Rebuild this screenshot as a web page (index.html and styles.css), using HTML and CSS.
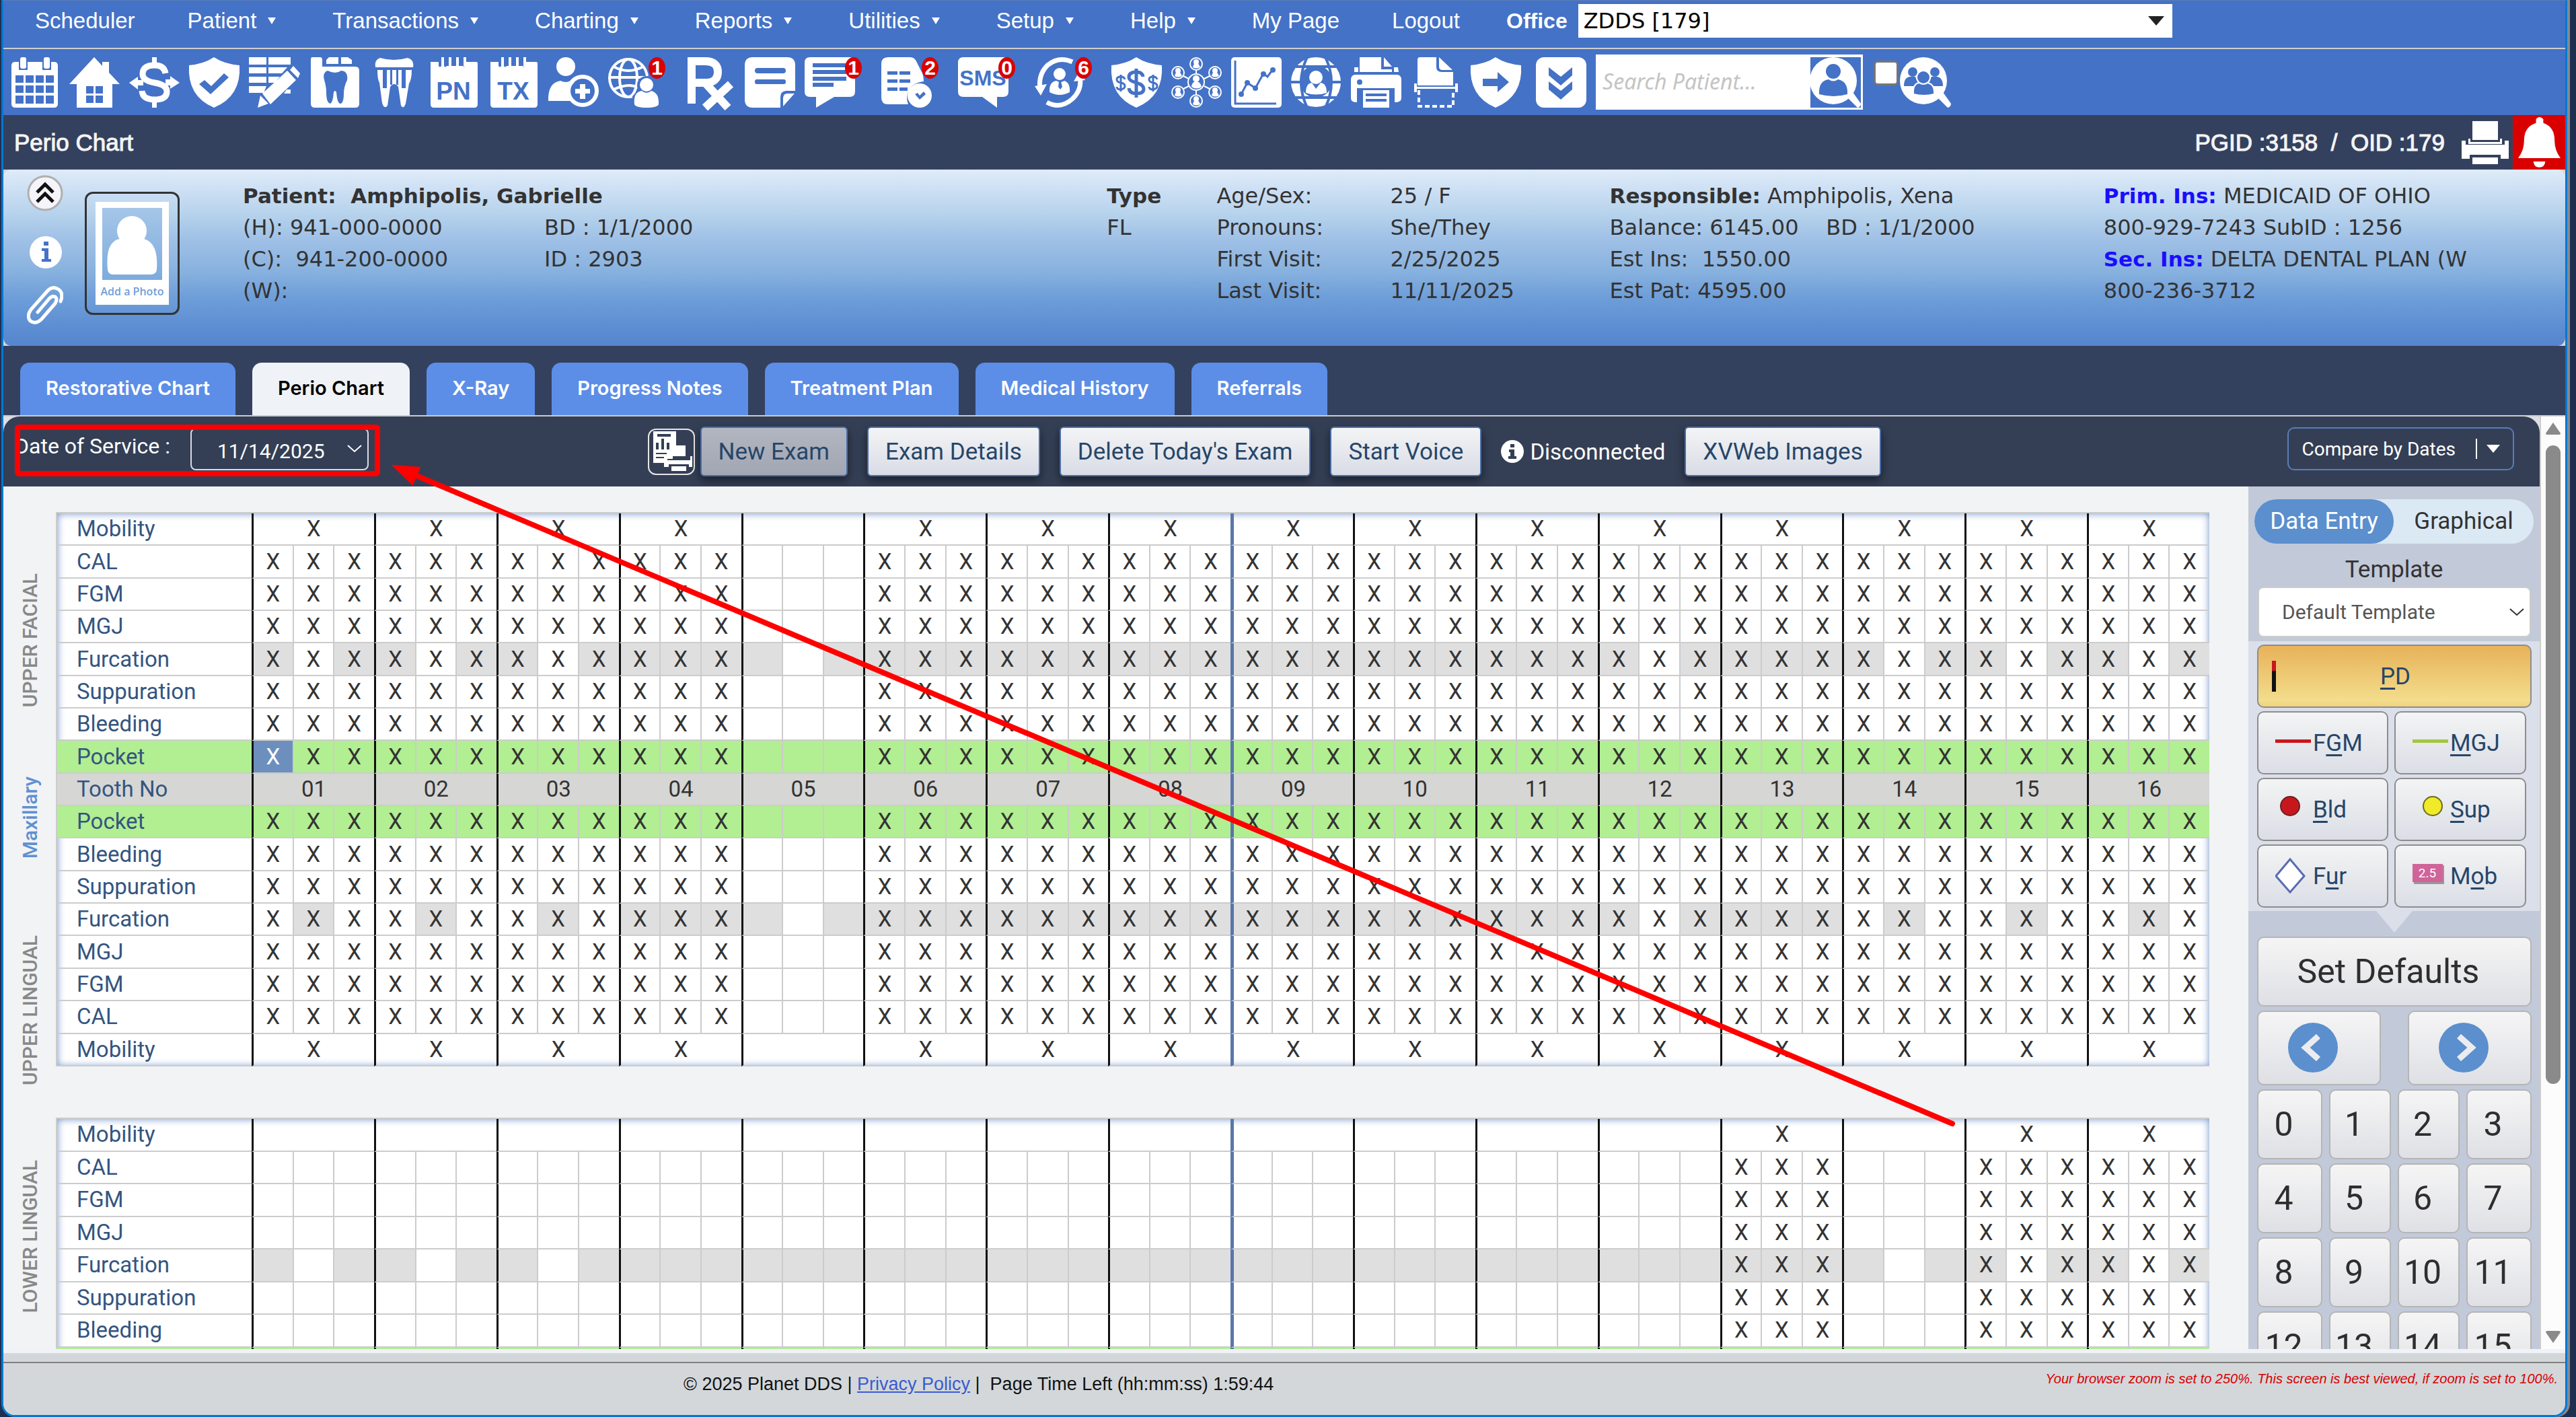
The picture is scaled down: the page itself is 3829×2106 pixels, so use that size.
FILE: index.html
```html
<!DOCTYPE html>
<html lang="en">
<head>
<meta charset="utf-8">
<title>Perio Chart</title>
<link rel="stylesheet" href="styles.css">
</head>
<body>
<div class="frame">
  <nav class="menu">
    <a href="#">Scheduler</a>
    <a href="#" class="drop">Patient</a>
    <a href="#" class="drop">Transactions</a>
    <a href="#" class="drop">Charting</a>
    <a href="#" class="drop">Reports</a>
    <a href="#" class="drop">Utilities</a>
    <a href="#" class="drop">Setup</a>
    <a href="#" class="drop">Help</a>
    <a href="#">My Page</a>
    <a href="#">Logout</a>
    <label for="office">Office</label>
    <span class="select office"><select id="office"><option>ZDDS [179]</option></select><svg viewBox="0 0 24 14"><path d="M0 0h24L12 14z" fill="#222"/></svg></span>
  </nav>

  <div class="tools">
    <button aria-label="Calendar"><svg viewBox="0 0 75 75"><path d="M8 7h6v12h13V7h22v12h13V7h5q5 0 5 6v56q0 6-6 6H9q-6 0-6-6V13q0-6 5-6z"/><rect x="16" width="9" height="17" rx="3"/><rect x="51" width="9" height="17" rx="3"/><path class="cut" d="M9 27h12v11H9zm15 0h12v11H24zm15 0h12v11H39zm15 0h12v11H54zM9 42h12v11H9zm15 0h12v11H24zm15 0h12v11H39zm15 0h12v11H54zM9 57h12v12H9zm15 0h12v12H24zm15 0h12v12H39zm15 0h12v12H54z"/></svg></button>
    <button aria-label="Home"><svg viewBox="0 0 75 75"><path d="M37 0l12 13V7h10v16l16 17H64v35H11V40H0z"/><path class="cut" d="M25 43h11v11H25zm14 0h11v11H39zM25 57h11v11H25zm14 0h11v11H39z"/></svg></button>
    <button aria-label="Payments"><svg viewBox="0 0 75 75"><path class="line" stroke-width="9" d="M54 24Q52 12 38 12Q20 12 20 25Q20 35 38 38Q56 41 56 51Q56 63 38 63Q20 63 19 50"/><path d="M34 0h7v12h-7zM34 62h7v13h-7zM0 38l13-9v5h8v8h-8v6zM75 38L61 28v5h-7v9h7v5z"/></svg></button>
    <button aria-label="Insurance check"><svg viewBox="0 0 75 75"><path d="M37 0q15 10 38 12Q78 58 37 75Q-3 58 0 12Q22 10 37 0z"/><path class="cut" d="M15 40l8-6 10 9 19-19 7 6-27 25z"/></svg></button>
    <button aria-label="Edit ledger"><svg viewBox="0 0 75 75"><path d="M0 0h26v11H0zm29 0h33v11H29zM0 15h26v9H0zm29 0h28l-8 9H29zM0 29h26v9H0zm29 0h17l-8 9H29zM0 43h26l-4 10H0zM56 48h6v6H52zM66 13l10 11-3 7-12-12zM57 20l13 14-38 36-12-16zM17 57l12 12-16 6z"/></svg></button>
    <button aria-label="Tooth chart"><svg viewBox="0 0 75 75"><path d="M5 0h12q3 0 3 4v10h49q6 0 6 6v49q0 6-6 6H9q-6 0-6-6V4q0-4 2-4z"/><path d="M30 0h14v10H26V4zM48 0h10l6 4v6H48z"/><path class="cut" d="M28 20q12 6 20 0 11 1 9 14-5 10-5 20 0 16-6 15-4-2-5-17-2-4-4 0-1 15-5 17-6-1-6-17 0-8-3-18-3-11 5-14z"/></svg></button>
    <button aria-label="Perio"><svg viewBox="0 0 75 75"><path d="M17 1q20 6 41 0 10 3 8 14H10Q8 4 17 1zM13 19h8v27h6V19h5v22h3V19h6v22h3V19h5v27h6V19h9q0 14-4 20l-5 30q-3 9-7 3l-4-28q-6-8-12 0l-4 28q-5 6-8-4l-4-30q-3-5-3-19z"/></svg></button>
    <button aria-label="Progress notes"><svg viewBox="0 0 75 75"><path d="M3 7h12v6q2 3 4 0V7h4v6q2 3 4 0h24q2 3 4 0V7h16q2 0 2 2v61q0 5-5 5H8q-5 0-5-5z"/><path d="M19 0h4v14h-4zm11 0h4v14h-4zm11 0h4v14h-4zm11 0h4v14h-4z"/><text class="cut" x="37" y="63" font-size="37">PN</text></svg></button>
    <button aria-label="Treatment plan"><svg viewBox="0 0 75 75"><path d="M3 7h12v6q2 3 4 0V7h4v6q2 3 4 0h24q2 3 4 0V7h16q2 0 2 2v61q0 5-5 5H8q-5 0-5-5z"/><path d="M19 0h4v14h-4zm11 0h4v14h-4zm11 0h4v14h-4zm11 0h4v14h-4z"/><text class="cut" x="37" y="63" font-size="37">TX</text></svg></button>
    <button aria-label="Add patient"><svg viewBox="0 0 75 75"><ellipse cx="26" cy="14" rx="14" ry="14"/><path d="M0 65Q-1 38 18 35q8 4 15 0l6 2q-12 12-5 28z"/><circle cx="51" cy="50" r="21" fill="none" stroke="#fff" stroke-width="6"/><path d="M47 40h8v7h7v7h-7v8h-8v-8h-7v-7h7z"/></svg></button>
    <button class="badged" aria-label="Online patients"><svg viewBox="0 0 75 75"><g class="line" stroke-width="4"><circle cx="30" cy="31" r="28"/><ellipse cx="30" cy="31" rx="13" ry="28"/><path d="M2 30h56M8 14q22 12 44 0M8 48q22-10 36-3"/></g><circle class="cut" cx="57" cy="42" r="14"/><path class="cut" d="M36 75V58q10-12 20-8l19 8v17z"/><circle cx="57" cy="41" r="10"/><path d="M39 70q-2-18 11-20 7 6 14 0 12 3 11 20-2 5-18 5t-18-5z"/></svg><b>1</b></button>
    <button class="wide" aria-label="Prescriptions"><svg viewBox="0 0 75 75"><path class="line" stroke-width="12" d="M10 69V6H30Q49 6 49 22Q49 38 30 38H12M30 38L64 75M68 40L30 75"/></svg></button>
    <button aria-label="Notes"><svg viewBox="0 0 75 75"><path d="M12 0h51q12 0 12 12v38H61q-8 1-8 9v16H12Q0 75 0 63V12Q0 0 12 0z"/><path d="M57 73V60q1-6 6-6h11z"/><rect class="cut" x="15" y="16" width="46" height="8" rx="4"/><rect class="cut" x="15" y="33" width="46" height="7" rx="3"/></svg></button>
    <button class="badged" aria-label="Messages"><svg viewBox="0 0 75 75"><path d="M8 0h59q8 0 8 8v43q0 8-8 8H44L17 75V59H8q-8 0-8-8V8q0-8 8-8z"/><path class="cut" d="M12 9h50v6H12zm0 10h50v6H12zm0 10h50v6H12zm0 9h31v6H12z"/></svg><b>1</b></button>
    <button class="badged wide" aria-label="Tasks"><svg viewBox="0 0 75 75"><path d="M10 0h33q6 0 9 6l7 14q4 6 4 16-19 2-24 18-2 9 1 16H10Q0 70 0 60V10Q0 0 10 0z"/><path class="cut" d="M9 21h15v5H9zm18 0h16v5H27zM9 33h15v5H9zm18 0h16v5H27zM9 45h15v5H9zm18 0h12v5H27z"/><circle cx="57" cy="57" r="18"/><path class="cut" d="M50 55l4-2 3 4 6-6 3 4-9 8z"/></svg><b>2</b></button>
    <button class="badged wide" aria-label="SMS"><svg viewBox="0 0 75 75"><path d="M8 0h59q8 0 8 8v43q0 8-8 8h-9v16L36 59H8q-8 0-8-8V8q0-8 8-8z"/><text class="cut" x="37" y="42" font-size="32">SMS</text></svg><b>0</b></button>
    <button class="badged wide" aria-label="Recall"><svg viewBox="0 0 75 75"><path class="line" stroke-width="7" d="M56 7Q36-2 19 12Q5 26 8 47M18 67Q38 78 56 62Q71 48 67 28"/><path d="M0 43l18-3-9 17zM75 34l-17 2 9-16z"/><circle cx="37" cy="25" r="9"/><path d="M22 52q-1-15 10-17 6 4 12 0 9 3 8 17-15 8-30 0z"/><path class="cut" d="M36 36h3l2 8-3 4-3-4z"/></svg><b>6</b></button>
    <button class="wide" aria-label="Fees"><svg viewBox="0 0 75 75"><path d="M37 0q15 10 38 12Q78 58 37 75Q-3 58 0 12Q22 10 37 0z"/><g fill="none" stroke="#4472c7"><path stroke-width="5" d="M47 29q-1-7-10-7-11 0-11 8 0 5 11 8t11 9q0 7-11 7-10 0-11-8M37 17v43"/><path stroke-width="3" d="M20 33q-1-4-6-4-6 0-6 4t6 5 6 5-6 5q-6 0-6-4M14 26v25M68 33q-1-4-6-4-6 0-6 4t6 5 6 5-6 5q-6 0-6-4M62 26v25"/></g></svg></button>
    <button aria-label="Referral network"><svg viewBox="0 0 75 75"><g class="line" stroke-width="2"><circle cx="37" cy="37" r="12"/><circle cx="37" cy="10" r="9"/><circle cx="37" cy="65" r="9"/><circle cx="10" cy="23" r="9"/><circle cx="65" cy="23" r="9"/><circle cx="10" cy="52" r="9"/><circle cx="65" cy="52" r="9"/><path d="M37 19v6M37 49v7M18 28l8 4M57 28l-8 4M18 47l8-4M57 47l-8-4"/></g><g><circle cx="37" cy="32" r="5"/><path d="M30 44q1-8 7-8t8 8q-7 5-15 0z"/><circle cx="37" cy="7" r="4"/><path d="M32 15q1-6 5-6t6 6q-6 3-11 0z"/><circle cx="37" cy="62" r="4"/><path d="M32 70q1-6 5-6t6 6q-6 3-11 0z"/><circle cx="10" cy="20" r="4"/><path d="M5 28q1-6 5-6t6 6q-6 3-11 0z"/><circle cx="65" cy="20" r="4"/><path d="M60 28q1-6 5-6t6 6q-6 3-11 0z"/><circle cx="10" cy="49" r="4"/><path d="M5 57q1-6 5-6t6 6q-6 3-11 0z"/><circle cx="65" cy="49" r="4"/><path d="M60 57q1-6 5-6t6 6q-6 3-11 0z"/></g></svg></button>
    <button aria-label="Reports"><svg viewBox="0 0 75 75"><rect width="75" height="75" rx="5"/><g fill="none" stroke="#4472c7" stroke-width="3"><path d="M6 5v64h61M15 55l9-17 12 8 12-22 6 5 8-11"/></g><g class="cut"><circle cx="15" cy="55" r="4"/><circle cx="24" cy="38" r="4"/><circle cx="36" cy="46" r="4"/><circle cx="48" cy="25" r="4"/><circle cx="62" cy="19" r="4"/></g></svg></button>
    <button aria-label="Portal"><svg viewBox="0 0 75 75"><circle cx="37" cy="37" r="37"/><g fill="none" stroke="#4472c7" stroke-width="4"><path d="M0 37h75M7 14h61M7 60h61M24 0Q6 37 24 75M51 0q18 37 0 75"/></g><circle class="cut" cx="37" cy="36" r="24"/><circle cx="37" cy="30" r="10"/><path d="M22 53q0-14 9-15l6 9 7-9q9 1 9 15-16 5-31 0z"/></svg></button>
    <button aria-label="Print"><svg viewBox="0 0 75 75"><path d="M13 0h32v18h16v4H13zM49 0l12 14H49zM5 15h6v7H5zM64 15h6l1 7h-7zM7 26h61q7 0 7 8v27q0 6-10 6V46H9v21Q0 67 0 61V34q0-8 7-8zM18 49h39v26H18z"/><path class="cut" d="M22 54h31v4H22zm0 8h31v4H22z"/><circle class="cut" cx="13" cy="37" r="4"/></svg></button>
    <button aria-label="Scan"><svg viewBox="0 0 75 75"><path d="M14 0h24v15q0 7 8 7h17v20H10V4q0-4 4-4zM42 0l20 19H47q-5 0-5-5zM5 39h4v5h57v-5h4v13h-4v-5H9v5H5z"/><path class="line" stroke-width="4" stroke-dasharray="7 4" d="M12 49v24h51V49"/></svg></button>
    <button aria-label="Forward"><svg viewBox="0 0 75 75"><path d="M37 0q15 10 38 12Q78 58 37 75Q-3 58 0 12Q22 10 37 0z"/><path class="cut" d="M18 32h22V22l17 15-17 15V43H18z"/></svg></button>
    <button class="more" aria-label="More"><svg viewBox="0 0 75 75"><rect width="75" height="75" rx="12"/><path class="cut" d="M19 15l18 14 17-14v12L37 42 19 27zM19 36l18 14 17-14v12L37 63 19 48z"/></svg></button>
    <div class="search">
      <input type="text" aria-label="Search patient" placeholder="Search Patient...">
      <button aria-label="Search"><svg viewBox="0 0 75 75"><circle cx="34" cy="35" r="35"/><path d="M55 60l8-8 12 17q0 5-5 6z"/><circle class="cut" cx="34" cy="21" r="11"/><path class="cut" d="M13 55q-1-20 14-22 7 5 14 0 15 3 14 22-20 6-42 0z"/></svg></button>
    </div>
    <input type="checkbox" class="tick" aria-label="Search all offices">
    <button class="group" aria-label="Search family"><svg viewBox="0 0 75 75"><circle cx="34" cy="35" r="35"/><path d="M55 60l8-8 12 17q0 5-5 6z"/><g class="cut"><circle cx="18" cy="22" r="7"/><circle cx="51" cy="22" r="7"/><path d="M5 43q0-13 9-14h8l6 14zM63 43q0-13-9-14h-8l-6 14z"/></g><g class="cut" stroke="#fff" stroke-width="2"><circle cx="34" cy="30" r="10"/><path d="M19 55q-1-16 9-17 6 4 12 0 11 2 10 17-15 4-31 0z"/></g></svg></button>
  </div>

  <header class="title">
    <h1>Perio Chart</h1>
    <span>PGID :3158 &nbsp;/ &nbsp;OID :179</span>
    <button class="print" aria-label="Print page"><svg viewBox="0 0 70 64"><path d="M16 0h38v28H16zM0 29h6v6h58v-6h6v27H58v-6H12v6H0zM10 26h3v5h44v-5h3v8H10zM16 54h38v10H16z"/></svg></button>
    <button class="bell" aria-label="Alerts"><svg viewBox="0 0 64 76"><path d="M27 3q5-6 11 0v6q17 6 17 26 0 15 9 27H0q9-12 9-27Q9 15 27 9zM23 67h18q-1 9-9 9t-9-9z"/></svg></button>
  </header>

  <section class="patient">
    <div class="side">
      <button aria-label="Collapse"><svg viewBox="0 0 54 54"><circle cx="27" cy="27" r="25" fill="#f4f4fa" stroke="#b0b0b0" stroke-width="3"/><path d="M15 26l12-12 12 12M15 40l12-12 12 12" fill="none" stroke="#111" stroke-width="5"/></svg></button>
      <button aria-label="Info"><svg viewBox="0 0 54 54"><circle cx="28" cy="27" r="24" fill="#fff"/><path d="M25 11h7v6h-7zM22 21h10v16h4v4H22v-4h4V25h-4z" fill="#4472c7"/></svg></button>
      <button class="clip" aria-label="Attachments"><svg viewBox="0 0 54 60"><path d="M50 24q5-12-3-18-9-6-17 3L6 36q-7 10-1 17 8 6 17-3l20-23q4-7 0-10-5-2-9 3L16 40" fill="none" stroke="#fff" stroke-width="5" stroke-linecap="round"/></svg></button>
    </div>
    <button class="photo"><span><svg viewBox="0 0 89 107"><circle cx="44" cy="34" r="22"/><path d="M8 92Q4 50 26 46q18 16 36 0 22 6 19 46-1 7-9 7H16q-7 0-8-7z"/></svg></span>Add a Photo</button>
    <div class="facts">
      <div class="who">
        <p><b>Patient: &nbsp;Amphipolis, Gabrielle</b></p>
        <p>(H): 941-000-0000</p><p>BD : 1/1/2000</p>
        <p>(C): &nbsp;941-200-0000</p><p>ID : 2903</p>
        <p>(W):</p>
      </div>
      <div><p><b>Type</b></p><p>FL</p></div>
      <div><p>Age/Sex:</p><p>Pronouns:</p><p>First Visit:</p><p>Last Visit:</p></div>
      <div><p>25 / F</p><p>She/They</p><p>2/25/2025</p><p>11/11/2025</p></div>
      <div><p><b>Responsible:</b> Amphipolis, Xena</p><p>Balance: 6145.00 &nbsp;&nbsp; BD : 1/1/2000</p><p>Est Ins: &nbsp;1550.00</p><p>Est Pat: 4595.00</p></div>
      <div class="ins"><p><b>Prim. Ins:</b> MEDICAID OF OHIO</p><p>800-929-7243 SubID : 1256</p><p><b>Sec. Ins:</b> DELTA DENTAL PLAN (W</p><p>800-236-3712</p></div>
    </div>
  </section>

  <nav class="tabs">
    <a href="#">Restorative Chart</a>
    <a href="#" class="on">Perio Chart</a>
    <a href="#">X-Ray</a>
    <a href="#">Progress Notes</a>
    <a href="#">Treatment Plan</a>
    <a href="#">Medical History</a>
    <a href="#">Referrals</a>
  </nav>

  <main>
    <div class="content">
      <div class="bar">
        <div class="date">
          <label for="dos">Date of Service :</label>
          <span class="select"><select id="dos"><option>11/14/2025</option></select><svg viewBox="0 0 22 12"><path d="M1 1l10 9L21 1" fill="none" stroke="#fff" stroke-width="2"/></svg></span>
        </div>
        <div class="actions">
          <div class="pair">
            <button class="report" aria-label="Print exam"><svg viewBox="0 0 62 62"><path fill-rule="evenodd" d="M4 1h34v21h-5v20H21v6H4zM10 5v4h20V5zM8 18v10h4V18zm8-6v16h4V12zm8 6v10h4V18zM8 33v2h16v-2zM8 39v2h12v-2z"/><path d="M32 22h20v16H32z"/><path d="M20 38h5v6h34v-6h3v16h-5v-4H27v4h-7zM31 53h22v7H31z"/></svg></button>
            <button class="btn off" disabled>New Exam</button>
          </div>
          <button class="btn">Exam Details</button>
          <button class="btn">Delete Today's Exam</button>
          <button class="btn">Start Voice</button>
          <span class="state"><svg viewBox="0 0 34 34"><circle cx="17" cy="17" r="17" fill="#fff"/><path d="M14 6h6v5h-6zM12 14h8v10h3v4H11v-4h3v-6h-2z" fill="#343f55"/></svg>Disconnected</span>
          <button class="btn">XVWeb Images</button>
        </div>
        <button class="compare">Compare by Dates<i></i><svg viewBox="0 0 20 12"><path d="M0 0h20L10 12z"/></svg></button>
      </div>
      <div class="work">
        <div class="arches">
          <span>UPPER FACIAL</span>
          <span class="arch">Maxillary</span>
          <span>UPPER LINGUAL</span>
          <span>LOWER LINGUAL</span>
        </div>
        <div class="charts">
          <table class="chart" id="upper"></table>
          <table class="chart" id="lower"></table>
        </div>
        <aside class="pad">
          <div class="toggle"><button class="on">Data Entry</button><button>Graphical</button></div>
          <label for="tpl">Template</label>
          <span class="select tpl"><select id="tpl"><option>Default Template</option></select><svg viewBox="0 0 22 12"><path d="M1 1l10 9L21 1" fill="none" stroke="#333" stroke-width="2"/></svg></span>
          <div class="modes">
            <button class="pd"><svg viewBox="0 0 6 46"><path d="M0 0h6v46H0z" fill="#111"/><path d="M0 0h6v15H0z" fill="#c8171c"/></svg><span><u>P</u>D</span></button>
            <button><svg viewBox="0 0 53 54"><path d="M0 22h53v5H0z" fill="#c8171c"/></svg><span>F<u>G</u>M</span></button>
            <button><svg viewBox="0 0 53 54"><path d="M0 22h53v5H0z" fill="#a2c742"/></svg><span><u>M</u>GJ</span></button>
            <button><svg viewBox="0 0 53 54"><circle cx="22" cy="22" r="14" fill="#c8171c" stroke="#6b2020" stroke-width="2"/></svg><span><u>B</u>ld</span></button>
            <button><svg viewBox="0 0 53 54"><circle cx="30" cy="22" r="14" fill="#f0ea28" stroke="#6b6a20" stroke-width="2"/></svg><span><u>S</u>up</span></button>
            <button><svg viewBox="0 0 53 54"><path d="M22 2l21 25-21 24L1 27z" fill="#fff" stroke="#5a6bb5" stroke-width="3"/></svg><span>F<u>u</u>r</span></button>
            <button><svg viewBox="0 0 53 54"><path d="M2 11h45v28H2z" fill="#999"/><path d="M0 9h45v27H0z" fill="#d0649a"/><text x="22" y="29" font-size="19">2.5</text></svg><span>M<u>o</u>b</span></button>
          </div>
          <div class="keys">
            <button class="all">Set Defaults</button>
            <div class="nav">
              <button aria-label="Previous"><svg viewBox="0 0 75 75"><circle cx="37" cy="37" r="37" fill="#5b8fce"/><path d="M45 20L26 37l19 17" fill="none" stroke="#ececf0" stroke-width="9"/></svg></button>
              <button aria-label="Next"><svg viewBox="0 0 75 75"><circle cx="37" cy="37" r="37" fill="#5b8fce"/><path d="M30 20l19 17-19 17" fill="none" stroke="#ececf0" stroke-width="9"/></svg></button>
            </div>
            <div class="digits">
              <button>0</button><button>1</button><button>2</button><button>3</button>
              <button>4</button><button>5</button><button>6</button><button>7</button>
              <button>8</button><button>9</button><button>10</button><button>11</button>
              <button>12</button><button>13</button><button>14</button><button>15</button>
            </div>
          </div>
        </aside>
      </div>
    </div>
    <div class="scroll">
      <svg viewBox="0 0 22 18"><path d="M11 0l11 16q0 2-3 2H3q-3 0-3-2z"/></svg>
      <div class="track"><div class="thumb"></div></div>
      <svg viewBox="0 0 22 18"><path d="M11 18L0 2q0-2 3-2h16q3 0 3 2z"/></svg>
    </div>
  </main>

  <footer>
    <p class="copy">© 2025 Planet DDS | <a href="#">Privacy Policy</a> |&nbsp; Page Time Left (hh:mm:ss) 1:59:44</p>
    <p class="warn">Your browser zoom is set to 250%. This screen is best viewed, if zoom is set to 100%.</p>
  </footer>
</div>
<svg class="note" viewBox="0 0 3829 2106" preserveAspectRatio="none"><rect x="26" y="635" width="535" height="69" rx="2"/><path d="M2902 1670L612 704"/><path class="head" d="M584 692l40 3-11 25z"/></svg>
<script src="chart.js"></script>
</body>
</html>
```
FILE: styles.css
```css
* { box-sizing: border-box; }
html, body { margin: 0; height: 100%; }
body { position: relative; overflow: hidden; background: #1e2f4f; font-family: Roboto, sans-serif; color: #333; }
p, h1 { margin: 0; }
a { color: inherit; text-decoration: none; }
button { margin: 0; padding: 0; border: 0; background: none; font: inherit; color: inherit; }
svg { display: block; flex: none; }

.frame { display: flex; flex-direction: column; height: 100vh; margin: 0 13px 0 2px; border: 3px solid #0078d4; border-top: 1px solid #5a7db8; border-radius: 0 0 20px 20px; box-shadow: 4px 0 0 #85888e; overflow: hidden; background: #d3d7da; }

/* main menu */
.menu { display: flex; align-items: center; height: 72px; padding: 0 0 10px 8px; background: #4472c7; border-bottom: 2px solid #cfcfcf; font: 33px "Liberation Sans", sans-serif; color: #fff; white-space: nowrap; }
.menu a { padding: 0 39px; }
.menu a.drop { display: flex; align-items: center; padding-right: 45px; }
.drop::after { content: ""; margin-left: 17px; border: 6px solid transparent; border-top: 10px solid #fff; border-bottom: 0; }
.menu label { margin: 0 16px 0 30px; font-weight: bold; font-size: 32px; }
.select { display: grid; align-items: center; }
.select > * { grid-area: 1 / 1; }
.select svg { justify-self: end; pointer-events: none; }
.select select { appearance: none; width: 100%; height: 100%; margin: 0; border: 0; background: none; font: inherit; color: inherit; }
.office { width: 883px; height: 50px; background: #fff; color: #000; font: 32px "DejaVu Sans", sans-serif; }
.office select { padding: 0 8px; }
.office svg { width: 24px; margin-right: 12px; }

/* icon bar */
.tools { display: flex; align-items: center; gap: 14px; height: 98px; padding-left: 9px; background: #4472c7; }
.tools button { position: relative; flex: none; }
.tools button svg { width: 75px; height: 75px; fill: #fff; overflow: visible; }
.tools .cut { fill: #4472c7; }
.tools .line { fill: none; stroke: #fff; }
.tools text { font: bold 37px "Liberation Sans", sans-serif; text-anchor: middle; }
.tools text[font-size="32"] { font-size: 32px; }
.tools .badged { margin-right: 12px; }
.tools .wide { margin-left: 13px; }
.tools b { position: absolute; top: 0; right: -10px; width: 25px; height: 32px; border-radius: 50%; background: #d90000; color: #fff; font: bold 30px/32px "Liberation Sans", sans-serif; text-align: center; }
.tools .more { margin-left: 8px; }
.search { display: flex; align-items: center; width: 397px; height: 82px; padding-right: 3px; background: #fff; }
.search input { flex: 1; min-width: 0; height: 100%; padding: 0 10px; border: 0; background: none; font: italic 32px "DejaVu Sans", "Noto Sans", sans-serif; }
.search input::placeholder { color: #c4c4c4; font-family: "Noto Sans", sans-serif; }
.search button { background: #4472c7; }
.tick { appearance: none; align-self: flex-start; width: 37px; height: 37px; margin: 17px 0 0 2px; border: 3px solid #767676; border-radius: 6px; background: #fff; }
.tools .group { margin-left: -11px; }

/* title bar */
.title { display: flex; align-items: center; height: 81px; padding-left: 16px; background: #34415e; color: #f4f4f4; font: 35px "Liberation Sans", sans-serif; -webkit-text-stroke: 1px #f4f4f4; }
.title h1 { flex: 1; font: inherit; }
.title svg { fill: #fff; }
.title .print { margin: 0 6px 0 25px; }
.title .print svg { width: 70px; }
.title .bell { display: flex; align-items: center; justify-content: center; width: 78px; height: 100%; background: #d90000; }
.bell svg { width: 63px; }

/* patient card */
.patient { display: flex; height: 262px; padding-left: 35px; border-radius: 12px; background: linear-gradient(#dfecf8, #cfe1f5 10%, #b5d2ec 26%, #9fc0e6 40%, #8ab3df 56%, #6f9fd9 72%, #5e8fd3 88%, #5585cd); font: 32px/47px "DejaVu Sans", sans-serif; }
.patient b { font-size: 31px; }
.side { display: flex; flex-direction: column; gap: 34px; padding-top: 8px; }
.side svg { width: 54px; }
.side .clip { margin-top: -12px; }
.photo { display: flex; flex-direction: column; align-items: center; flex: none; width: 141px; height: 183px; margin: 33px 94px 0 32px; padding: 12px 13px; border: 3px solid #333; border-radius: 12px; color: #6f9fd9; font: 600 16px/34px "Open Sans", sans-serif; white-space: nowrap; background: linear-gradient(#fff, #fff) center / 109px 153px no-repeat; }
.photo span { margin-top: 9px; background: linear-gradient(#a5c6e8, #7dabdc); }
.photo svg { width: 89px; fill: #fff; }
.facts { flex: 1; display: grid; grid-template-columns: 1284fr 163fr 258fr 326fr 734fr 686fr; padding-top: 16px; white-space: nowrap; }
.facts > div { min-width: 0; }
.who { display: grid; grid-template-columns: 448px 1fr; align-content: start; }
.who p:first-child, .who p:last-child { grid-column: 1 / 3; }
.ins b { color: #1a0dff; }

/* section tabs */
.tabs { display: flex; gap: 25px; height: 105px; padding: 25px 25px 0; background: #34415e; border-bottom: 2px solid #c9ccd0; font: 600 29px/76px Inter, sans-serif; color: #fff; }
.tabs a { padding: 0 38px; border-radius: 14px 14px 0 0; background: #5c8ee8; white-space: nowrap; }
.tabs .on { background: #eff2f7; color: #000; }

main { flex: 1; display: flex; min-height: 0; overflow: hidden; }
.content { flex: 1; display: flex; flex-direction: column; min-width: 0; background: #dcdfe4; border-right: 2px solid #ccc; }
.scroll { display: flex; flex-direction: column; align-items: center; gap: 16px; width: 36px; padding: 9px 0; background: #fcfcfc; }
.scroll svg { width: 22px; fill: #8a8a8a; }
.track { flex: 1; }
.thumb { width: 22px; height: 73%; border-radius: 11px; background: #8a8a8a; }

/* chart toolbar */
.bar { display: grid; grid-template-columns: 958fr 2439fr auto; align-items: center; flex: none; height: 104px; padding-right: 38px; border-radius: 24px 24px 0 0; background: #343f55; color: #fff; }
.date { display: flex; align-items: center; gap: 30px; padding-left: 17px; font-size: 32px; }
.date label { margin-top: -16px; }
.date .select { width: 265px; height: 63px; margin-top: -8px; border: 2px solid #d9dce2; border-radius: 8px; font-size: 30px; }
.date select { padding: 6px 38px 0; }
.date svg { width: 22px; margin-right: 8px; }
.actions { display: flex; align-items: center; gap: 29px; }
.pair { display: flex; align-items: center; gap: 8px; }
.report { display: grid; place-items: center; width: 70px; height: 69px; border: 2px solid #e6e6e6; border-radius: 12px; }
.report svg { width: 62px; fill: #fff; }
.btn { height: 74px; padding: 0 25px; border: 2px solid #4a6ea9; border-radius: 6px; background: linear-gradient(#f3f4f5, #d9dce6); box-shadow: 0 6px 14px rgba(0, 0, 0, .5); color: #264669; font-size: 35px; white-space: nowrap; }
.off { background: linear-gradient(#b2b6c0, #a1a6b3); }
.state { display: flex; align-items: center; gap: 9px; font-size: 33px; }
.state svg { width: 34px; }
.compare { display: flex; align-items: center; height: 64px; margin-top: -8px; padding: 0 19px; border: 2px solid #5a7db8; border-radius: 10px; font-size: 28px; white-space: nowrap; }
.compare i { width: 2px; height: 30px; margin: 0 14px 0 30px; background: #fff; }
.compare svg { width: 20px; fill: #fff; }

/* chart grid */
.work { flex: 1; display: flex; min-height: 0; overflow: hidden; background: #f1f3f5; }
.arches { display: grid; grid-template-rows: 382px 144px 430px 241px; align-content: start; place-items: center; width: 78px; padding-top: 38px; font-size: 30px; font-weight: 500; color: #888; }
.arches span { writing-mode: vertical-rl; transform: rotate(180deg); }
.arches .arch { color: #6090d0; }
.charts { flex: 1; min-width: 0; padding: 38px 58px 0 0; }
.chart { width: 100%; table-layout: fixed; border-spacing: 0; border: solid #ccc; border-width: 2px 0 0 2px; background: #fff; box-shadow: inset 0 0 12px #6d8fca; font-size: 33px; line-height: 42px; }
#upper { height: 824px; margin-bottom: 76px; }
#lower { height: 390px; }
.chart col.name { width: 289px; }
.chart th, .chart td { height: 48px; padding: 0; border-bottom: 2px solid #ccc; text-align: center; font-weight: normal; }
.chart th { padding-left: 29px; text-align: left; color: #34557f; }
.chart td { border-left: 2px solid #ccc; }
.chart .tooth { border-left: 3px solid #111; }
.chart .mid { border-left: 5px solid #5a76aa; }
.chart .grey { background: #dfdfdf; }
.chart .pocket { background: #b2ee92; }
.chart .number { background: #d6d6d5; }
.chart .current { background: #6d8fbe; color: #fff; }

/* entry panel */
.pad { width: 433px; flex: none; background: #c2c9d9; font-size: 35px; text-align: center; }
.toggle { display: flex; margin: 19px 9px 19px; border-radius: 33px; background: #dbe9f5; line-height: 66px; }
.toggle button { flex: 1; border-radius: 33px; }
.toggle .on { flex: 0 0 207px; background: #5b8fce; color: #fff; }
.pad label { display: block; line-height: 40px; }
.tpl { height: 75px; margin: 5px 13px 6px 14px; border: 2px solid #ccc; border-radius: 8px; background: #fff; color: #555; font-size: 30px; }
.tpl select { padding: 0 34px; }
.tpl svg { width: 22px; margin-right: 8px; }
.modes { position: relative; display: grid; grid-template-columns: 195px 196px; gap: 5px 9px; padding: 5px 13px; background: #dbdfea; color: #264669; }
.modes::after { content: ""; position: absolute; top: 100%; left: 190px; border: 27px solid transparent; border-top: 32px solid #dbdfea; border-bottom: 0; }
.modes button { display: flex; align-items: center; gap: 3px; height: 94px; padding-left: 25px; border: 2px solid #8d8d8d; border-radius: 10px; background: linear-gradient(#f3f4f4, #dbdee6); }
.modes svg { width: 53px; height: 54px; }
.modes svg text { fill: #fff; text-anchor: middle; font: 19px Roboto, sans-serif; }
.modes .pd { grid-column: 1 / 3; margin-right: -8px; padding: 0 26px 0 20px; background: linear-gradient(#e8b45c, #e8b45c 5%, #f3dd8c 90%, #f0d27c); }
.modes .pd svg { width: 6px; height: 46px; }
.pd span { flex: 1; }
u { text-underline-offset: 5px; text-decoration-thickness: 3px; }
.keys { display: flex; flex-direction: column; gap: 6px; padding: 38px 12px 0 13px; font-size: 50px; color: #2e2e2e; }
.keys button { height: 104px; padding-right: 18px; border: 2px solid #b5b5b5; border-radius: 10px; background: linear-gradient(#f5f5f5, #dfe0e5); }
.keys svg { width: 75px; height: 75px; }
.nav { display: flex; justify-content: space-between; }
.nav button { display: grid; place-items: center; width: 184px; height: 111px; }
.digits { display: grid; grid-template-columns: 97px 92px 92px 97px; justify-content: space-between; gap: 6px 0; }

/* footer */
footer { display: flex; justify-content: space-between; flex: none; height: 98px; padding: 19px 11px 0 1011px; border-top: 6px solid #eff2f7; background: linear-gradient(#808080, #808080) 0 13px / 100% 2px no-repeat #d3d7da; color: #111; white-space: nowrap; font-family: "Liberation Sans", sans-serif; }
.copy { font-size: 27px; line-height: 54px; }
.copy a { color: #3a5bd0; text-decoration: underline; }
.warn { color: #d90000; font: italic 20px/38px "Liberation Sans", sans-serif; }

/* callout drawn over the page */
.note { position: absolute; top: 0; left: 0; width: 100%; height: 100%; pointer-events: none; fill: none; stroke: #f00; stroke-width: 8; stroke-linecap: round; }
.note .head { fill: #f00; stroke-width: 2; }
```
FILE: chart.js
```js
// Each tooth has three sites. Furcation patterns: g = shaded site, w = open site.
const outer = 'gwg gwg gwg ggg gwg ggg ggg ggg ggg ggg ggg gwg ggg gwg gwg gwg'.split(' ');
const inner = 'wgw wgw wgw ggg gwg ggg ggg ggg ggg ggg ggg gwg ggg wgw wgw wgw'.split(' ');
const lowerFur = 'gwg gwg gwg ggg ggg ggg ggg ggg ggg ggg ggg ggg ggg gwg gwg gwg'.split(' ');

function build(id, rows, hasMark, fur) {
  const table = document.getElementById(id);
  let html = '<colgroup><col class="name">' + '<col>'.repeat(48) + '</colgroup>';
  let furRow = 0;
  rows.forEach((name, r) => {
    const kind = name === 'Pocket' || name === '' ? 'pocket' : name === 'Tooth No' ? 'number' : '';
    html += `<tr class="${kind}"><th scope="row">${name}</th>`;
    const whole = name === 'Mobility' || name === 'Tooth No';
    for (let t = 0; t < 16; t++) {
      const edge = t === 8 ? 'tooth mid' : 'tooth';
      const mark = name && hasMark(t) ? 'X' : '';
      if (whole) {
        const text = kind === 'number' ? String(t + 1).padStart(2, '0') : mark;
        html += `<td colspan="3" class="${edge}">${text}</td>`;
      } else {
        for (let s = 0; s < 3; s++) {
          const grey = name === 'Furcation' && fur[furRow][t][s] === 'g' ? ' grey' : '';
          const current = id === 'upper' && r === 7 && t === 0 && s === 0 ? ' current' : '';
          html += `<td class="${s === 0 ? edge : ''}${grey}${current}">${mark}</td>`;
        }
      }
    }
    if (name === 'Furcation') furRow++;
    html += '</tr>';
  });
  table.innerHTML = html;
}

const half = ['Mobility', 'CAL', 'FGM', 'MGJ', 'Furcation', 'Suppuration', 'Bleeding'];
build('upper', [...half, 'Pocket', 'Tooth No', 'Pocket', ...[...half].reverse()], t => t !== 4, [outer, inner]);
build('lower', [...half, ''], t => t === 12 || t > 13, [lowerFur]);
```
